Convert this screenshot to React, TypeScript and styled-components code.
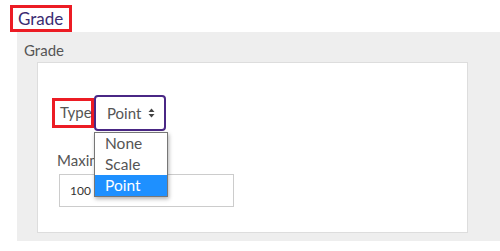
import styled, { createGlobalStyle } from "styled-components";

const GlobalStyle = createGlobalStyle`
  body {
    margin: 0;
    background: #fff;
    font-family: "Lato", "Noto Sans", sans-serif;
  }
`;

const Page = styled.div`
  width: 500px;
  height: 251px;
  overflow: hidden;
  padding-top: 5px;
  box-sizing: border-box;
`;

const Heading = styled.div`
  display: inline-block;
  margin-left: 10px;
  height: 27px;
  box-sizing: border-box;
  border: 3px solid #ec1c24;
  padding: 0 6px 0 5px;
  font-size: 17px;
  line-height: 22px;
  color: #3b2c72;
  position: relative;
  z-index: 1;
`;

const Panel = styled.section`
  margin-left: 17px;
  width: 483px;
  background: #eeeeee;
  padding: 8px 0 8px 7px;
  box-sizing: border-box;
`;

const PanelLabel = styled.div`
  font-size: 15px;
  line-height: 20px;
  color: #555;
  margin-bottom: 2px;
`;

const Card = styled.div`
  margin-left: 13px;
  width: 431px;
  height: 171px;
  box-sizing: border-box;
  background: #fff;
  border: 1px solid #dddddd;
  padding: 32px 0 0 14px;
`;

const Row = styled.div`
  display: flex;
  align-items: center;
`;

const Marked = styled.div`
  width: 42px;
  height: 30px;
  box-sizing: border-box;
  border: 3px solid #ec1c24;
  padding: 0 0 0 5px;
  font-size: 15px;
  line-height: 26px;
  color: #555;
  white-space: nowrap;
  display: flex;
  align-items: flex-end;
`;

const SelectWrap = styled.div`
  position: relative;
`;

const SelectBox = styled.div`
  width: 72px;
  height: 36px;
  box-sizing: border-box;
  border: 2px solid #4a2785;
  border-radius: 4px;
  padding: 0 9px 0 11px;
  display: flex;
  align-items: center;
  justify-content: space-between;
  font-size: 15px;
  color: #555;
  background: #fff;
`;

const Menu = styled.ul`
  position: absolute;
  left: 0;
  top: 37px;
  width: 74px;
  margin: 0;
  padding: 0;
  list-style: none;
  background: #fff;
  border: 1px solid #777;
  box-sizing: border-box;
  box-shadow: 1px 2px 4px rgba(0, 0, 0, 0.3);
  z-index: 2;
`;

const Option = styled.li<{ $active?: boolean }>`
  height: 21px;
  line-height: 21px;
  padding-left: 10px;
  font-size: 15.5px;
  color: ${(p) => (p.$active ? "#fff" : "#555")};
  background: ${(p) => (p.$active ? "#1e90ff" : "transparent")};
`;

const FieldLabel = styled.div`
  margin-top: 19px;
  margin-left: 5px;
  font-size: 15px;
  line-height: 20px;
  color: #555;
`;

const Input = styled.div`
  margin-top: 4px;
  margin-left: 7px;
  width: 175px;
  height: 33px;
  box-sizing: border-box;
  border: 1px solid #cccccc;
  padding-left: 10px;
  font-size: 12px;
  line-height: 31px;
  color: #333;
`;

const Arrows = () => (
  <svg width="7" height="10" viewBox="0 0 7 10">
    <path d="M3.5 0.5 L6.5 4 L0.5 4 Z" fill="#444" />
    <path d="M3.5 9.5 L6.5 6 L0.5 6 Z" fill="#444" />
  </svg>
);

export default function App() {
  return (
    <>
      <GlobalStyle />
      <Page>
        <Heading>Grade</Heading>
        <Panel>
          <PanelLabel>Grade</PanelLabel>
          <Card>
            <Row>
              <Marked>Type</Marked>
              <SelectWrap>
                <SelectBox>
                  <span>Point</span>
                  <Arrows />
                </SelectBox>
                <Menu>
                  <Option>None</Option>
                  <Option>Scale</Option>
                  <Option $active>Point</Option>
                </Menu>
              </SelectWrap>
            </Row>
            <FieldLabel>Maximum grade</FieldLabel>
            <Input>100</Input>
          </Card>
        </Panel>
      </Page>
    </>
  );
}
